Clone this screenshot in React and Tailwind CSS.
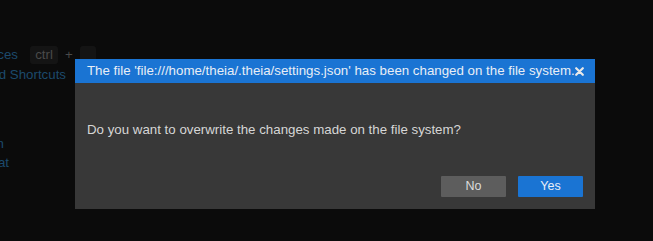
import React from 'react';

const bgText = 'text-[#1c4a6c]';

const Backdrop = () => (
  <div className="flex flex-col pt-[46px] text-[13.3px] leading-[18px]">
    <div className="flex items-center h-[18px]">
      <div className={`w-[18px] flex justify-end whitespace-nowrap ${bgText}`}>Preferences</div>
      <div className="ml-[12px] w-[28px] h-[18px] rounded-[3px] bg-[#141414] text-[#4a4a4a] flex items-center justify-center">ctrl</div>
      <div className="ml-[7px] text-[#4a4a4a]">+</div>
      <div className="ml-[7px] w-[16px] h-[18px] rounded-[3px] bg-[#141414]" />
    </div>
    <div className="flex items-center h-[18px] mt-[2px]">
      <div className={`w-[66px] flex justify-end whitespace-nowrap ${bgText}`}>Keyboard Shortcuts</div>
    </div>
    <div className="flex items-center h-[18px] mt-[51px]">
      <div className={`w-[4px] flex justify-end whitespace-nowrap ${bgText}`}>Extension</div>
    </div>
    <div className="flex items-center h-[18px] mt-[1px]">
      <div className={`w-[9px] flex justify-end whitespace-nowrap ${bgText}`}>Format</div>
    </div>
  </div>
);

const CloseIcon = () => (
  <svg width="9" height="9" viewBox="0 0 9 9" className="shrink-0">
    <path d="M1.2 1.2 L7.8 7.8 M7.8 1.2 L1.2 7.8" stroke="#e8e8e8" strokeWidth="2.2" strokeLinecap="round" />
  </svg>
);

export default function App() {
  return (
    <div
      className="relative w-[653px] h-[241px] overflow-hidden bg-[#0b0b0b]"
      style={{ fontFamily: '"Liberation Sans", Arial, sans-serif' }}
    >
      <Backdrop />

      {/* Dialog */}
      <div className="absolute left-[75px] top-[59px] w-[520px] h-[150px] flex flex-col bg-[#383838]">
        <div className="h-[24px] bg-[#1a74d3] flex items-center pl-[12px] pr-[14px] text-[13.3px] text-[#e8eef6]">
          <span className="whitespace-nowrap">The file 'file:///home/theia/.theia/settings.json' has been changed on the file system.</span>
          <CloseIcon />
        </div>
        <div className="flex-1 flex flex-col px-[12px]">
          <p className="mt-[39px] text-[13.3px] text-[#d6d6d6] leading-[16px]">
            Do you want to overwrite the changes made on the file system?
          </p>
          <div className="mt-auto mb-[12px] flex justify-end gap-[12px]">
            <button className="w-[65px] h-[21px] bg-[#5d5d5d] text-[#dcdcdc] text-[12.5px] rounded-[1px]">No</button>
            <button className="w-[65px] h-[21px] bg-[#1a74d3] text-[#e8eef6] text-[12.5px] rounded-[1px]">Yes</button>
          </div>
        </div>
      </div>
    </div>
  );
}
